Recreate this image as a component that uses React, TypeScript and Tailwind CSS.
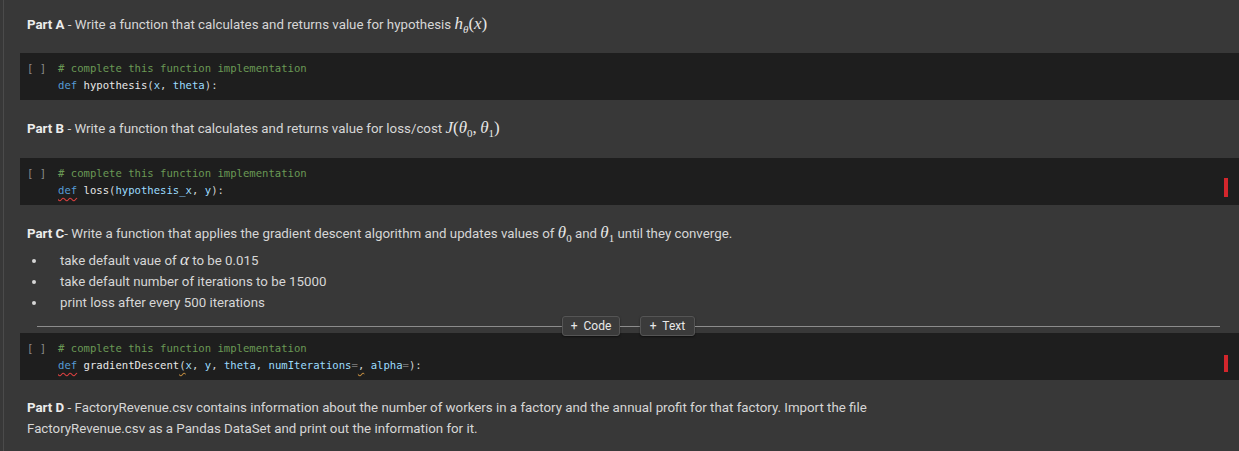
import React from 'react';

const mono = { fontFamily: '"DejaVu Sans Mono", "Liberation Mono", monospace' };

const Theta = ({ sub }: { sub?: string }) => (
  <span className="italic">
    θ{sub && <sub className="not-italic text-[11px] bottom-[-4px]">{sub}</sub>}
  </span>
);

const Math = ({ children }: { children: React.ReactNode }) => (
  <span className="text-[17px] leading-none text-[#e6e6e6] font-['Liberation_Serif','DejaVu_Serif',serif]">{children}</span>
);

const Comment = () => <span className="text-[#6a9955]">{'# complete this function implementation'}</span>;

const CodeCell = ({ children, marker, markerTop = 20, markerH = 19 }: { children: React.ReactNode; marker?: boolean; markerTop?: number; markerH?: number }) => (
  <div className="relative ml-[16px] h-[47px] bg-[#1e1e1e] pl-[7px] pt-[7px] text-[10.6px] leading-[17px] text-[#d4d4d4]" style={mono}>
    <div className="flex">
      <span className="w-[31px] text-[#8a8a8a]">[ ]</span>
      <div>
        <div><Comment /></div>
        <div>{children}</div>
      </div>
    </div>
    {marker && (
      <div className="absolute right-[11px] w-[4px] bg-[#d3262c]" style={{ top: markerTop, height: markerH }} />
    )}
  </div>
);

const Def = ({ wavy }: { wavy?: boolean }) => (
  <span className={wavy ? 'text-[#569cd6] underline decoration-wavy decoration-[#e04040] underline-offset-[3px]' : 'text-[#569cd6]'}>def</span>
);

export default function App() {
  return (
    <div className="w-[1239px] h-[451px] overflow-hidden bg-[#383838] font-['Roboto','Liberation_Sans',sans-serif] text-[13.3px] leading-[21px] text-[#d6d6d6]">
      <div className="ml-[3px] h-full border-l border-[#4b4b4b]">
        {/* Part A */}
        <div className="pl-[23px] pt-[14px] h-[53px]">
          <b className="text-[#ececec] font-bold">Part A</b> - Write a function that calculates and returns value for hypothesis{' '}
          <Math>
            <span className="italic">h</span>
            <sub className="text-[11px] italic bottom-[-4px]">θ</sub>
            (<span className="italic">x</span>)
          </Math>
        </div>
        <CodeCell>
          <Def /> <span className="text-[#e8e8e8]">hypothesis</span>(<span className="text-[#9cdcfe]">x</span>, <span className="text-[#9cdcfe]">theta</span>):
        </CodeCell>

        {/* Part B */}
        <div className="pl-[23px] pt-[18px] h-[58px]">
          <b className="text-[#ececec] font-bold">Part B</b> - Write a function that calculates and returns value for loss/cost{' '}
          <Math>
            <span className="italic">J</span>(<Theta sub="0" />,&thinsp;<Theta sub="1" />)
          </Math>
        </div>
        <CodeCell marker markerTop={20} markerH={19}>
          <Def wavy /> <span className="text-[#e8e8e8]">loss</span>(<span className="text-[#9cdcfe]">hypothesis_x</span>, <span className="text-[#9cdcfe]">y</span>):
        </CodeCell>

        {/* Part C */}
        <div className="relative pl-[23px] pt-[18px] h-[128px]">
          <div>
            <b className="text-[#ececec] font-bold">Part C</b>- Write a function that applies the gradient descent algorithm and updates values of{' '}
            <Math><Theta sub="0" /></Math> and <Math><Theta sub="1" /></Math> until they converge.
          </div>
          <ul className="mt-[6px]">
            {[
              <>take default vaue of <Math><span className="italic">α</span></Math> to be 0.015</>,
              <>take default number of iterations to be 15000</>,
              <>print loss after every 500 iterations</>,
            ].map((t, i) => (
              <li key={i} className="flex items-center h-[21px]">
                <span className="ml-[5px] mr-[24px] h-[4px] w-[4px] rounded-full bg-[#d6d6d6]" />
                <span>{t}</span>
              </li>
            ))}
          </ul>
          {/* add-cell divider */}
          <div className="absolute left-[33px] right-[19px] top-[111px] flex items-center z-10">
            <div className="flex-1 h-px bg-[#8c8c8c]" />
            <button className="h-[20px] w-[58px] rounded-[3px] border border-[#555] bg-[#3b3b3b] shadow-[0_1px_2px_rgba(0,0,0,0.5)] text-[12px] leading-[18px] text-[#e8e8e8]">
              +&nbsp; Code
            </button>
            <div className="w-[20px] h-px bg-[#8c8c8c]" />
            <button className="h-[20px] w-[55px] rounded-[3px] border border-[#555] bg-[#3b3b3b] shadow-[0_1px_2px_rgba(0,0,0,0.5)] text-[12px] leading-[18px] text-[#e8e8e8]">
              +&nbsp; Text
            </button>
            <div className="flex-1 h-px bg-[#8c8c8c]" />
          </div>
        </div>
        <CodeCell marker markerTop={22} markerH={17}>
          <Def wavy /> <span className="text-[#e8e8e8]">gradientDescent</span>
          <span className="underline decoration-wavy decoration-[#c08a3e] underline-offset-[3px]">(</span>
          <span className="text-[#9cdcfe]">x</span>, <span className="text-[#9cdcfe]">y</span>, <span className="text-[#9cdcfe]">theta</span>,{' '}
          <span className="text-[#9cdcfe]">numIterations</span><span className="text-[#6f6f6f]">=</span>
          <span className="underline decoration-wavy decoration-[#c08a3e] underline-offset-[3px]">,</span>{' '}
          <span className="text-[#9cdcfe]">alpha</span><span className="text-[#6f6f6f]">=</span>):
        </CodeCell>

        {/* Part D */}
        <div className="pl-[23px] pt-[17px]">
          <b className="text-[#ececec] font-bold">Part D</b> - FactoryRevenue.csv contains information about the number of workers in a factory and the annual profit for that factory. Import the file
          <br />
          FactoryRevenue.csv as a Pandas DataSet and print out the information for it.
        </div>
      </div>
    </div>
  );
}
